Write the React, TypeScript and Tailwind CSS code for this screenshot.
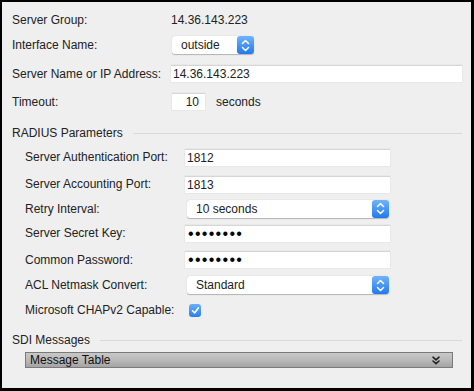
import React from "react"

const font = { fontFamily: '"Liberation Sans", Arial, sans-serif' }

function Stepper() {
  return (
    <span className="flex h-full w-[17px] shrink-0 items-center justify-center rounded-[3px] bg-gradient-to-b from-[#6fb4fb] to-[#1f78ea]">
      <svg width="9" height="13" viewBox="0 0 9 13" fill="none" stroke="white" strokeWidth="1.5" strokeLinecap="round" strokeLinejoin="round">
        <path d="M1.5 4.5 L4.5 1.5 L7.5 4.5" />
        <path d="M1.5 8.5 L4.5 11.5 L7.5 8.5" />
      </svg>
    </span>
  )
}

function Field({ children, className = "" }: { children?: React.ReactNode; className?: string }) {
  return (
    <div className={`flex h-[17px] items-center border-t border-[#d6d6d6] bg-white pl-[2px] shadow-[0_0_0_0.5px_#e2e2e2] ${className}`}>
      {children}
    </div>
  )
}

function Select({ value, className = "" }: { value: string; className?: string }) {
  return (
    <div className={`flex h-[18px] items-center rounded-[3px] bg-white shadow-[0_0.5px_1px_rgba(0,0,0,0.25)] ${className}`}>
      <span className="flex-1 pl-[9px]">{value}</span>
      <Stepper />
    </div>
  )
}

function Dots() {
  return <span className="pl-[1px] text-[16px] leading-none tracking-[1.3px] text-black">••••••••</span>
}

function Row({ label, h, labelW, children }: { label: string; h: string; labelW: string; children?: React.ReactNode }) {
  return (
    <div className={`flex items-center ${h}`}>
      <div className={`shrink-0 whitespace-nowrap ${labelW}`}>{label}</div>
      {children}
    </div>
  )
}

function Section({ title }: { title: string }) {
  return (
    <div className="flex h-[20px] items-center">
      <span>{title}</span>
      <span className="ml-[10px] h-px flex-1 bg-[#d9d9d9]" />
    </div>
  )
}

export default function App() {
  return (
    <div className="h-[391px] w-[474px] bg-black pl-[2px] pr-[3px] pt-[2px] pb-[3px]">
      <div
        className="flex h-full w-full flex-col bg-[#efefef] pl-[10px] pr-[9px] pt-[6px] text-[12px] text-[#222]"
        style={font}
      >
        <Row label="Server Group:" h="h-[24px]" labelW="w-[159px]">
          <span>14.36.143.223</span>
        </Row>
        <Row label="Interface Name:" h="h-[26px]" labelW="w-[160px]">
          <Select value="outside" className="w-[82px]" />
        </Row>
        <Row label="Server Name or IP Address:" h="h-[31px]" labelW="w-[159px]">
          <Field className="flex-1">14.36.143.223</Field>
        </Row>
        <Row label="Timeout:" h="h-[25px]" labelW="w-[160px]">
          <Field className="w-[33px] justify-end pr-[6px]">10</Field>
          <span className="ml-[11px]">seconds</span>
        </Row>

        <div className="mt-[9px]">
          <Section title="RADIUS Parameters" />
        </div>

        <div className="flex flex-col pl-[13px]">
          <Row label="Server Authentication Port:" h="h-[28px]" labelW="w-[160px]">
            <Field className="w-[205px]">1812</Field>
          </Row>
          <Row label="Server Accounting Port:" h="h-[26px]" labelW="w-[160px]">
            <Field className="w-[205px]">1813</Field>
          </Row>
          <Row label="Retry Interval:" h="h-[23px]" labelW="w-[162px]">
            <Select value="10 seconds" className="w-[202px]" />
          </Row>
          <Row label="Server Secret Key:" h="h-[26px]" labelW="w-[160px]">
            <Field className="w-[205px]"><Dots /></Field>
          </Row>
          <Row label="Common Password:" h="h-[27px]" labelW="w-[160px]">
            <Field className="w-[205px]"><Dots /></Field>
          </Row>
          <Row label="ACL Netmask Convert:" h="h-[24px]" labelW="w-[162px]">
            <Select value="Standard" className="w-[202px]" />
          </Row>
          <Row label="Microsoft CHAPv2 Capable:" h="h-[26px]" labelW="w-[164px]">
            <span className="flex h-[13px] w-[12px] items-center justify-center rounded-[3px] bg-gradient-to-b from-[#6aaffa] to-[#2a7ee9]">
              <svg width="9" height="9" viewBox="0 0 9 9" fill="none" stroke="white" strokeWidth="1.6" strokeLinecap="round" strokeLinejoin="round">
                <path d="M1.5 4.8 L3.6 7 L7.5 1.8" />
              </svg>
            </span>
          </Row>
        </div>

        <div className="mt-[7px]">
          <Section title="SDI Messages" />
        </div>

        <div className="ml-[13px] mr-[9px] mt-[2px] flex h-[16px] items-center border border-[#7a7a7a] bg-gradient-to-b from-[#c8c8c8] via-[#b9b9b9] to-[#a4a4a4] pl-[4px] pr-[12px] text-[#111]">
          <span className="flex-1">Message Table</span>
          <svg width="8" height="9" viewBox="0 0 8 9" fill="none" stroke="#222" strokeWidth="1.6" strokeLinecap="round" strokeLinejoin="round">
            <path d="M1 1.2 L4 3.8 L7 1.2" />
            <path d="M1 5 L4 7.6 L7 5" />
          </svg>
        </div>
      </div>
    </div>
  )
}
